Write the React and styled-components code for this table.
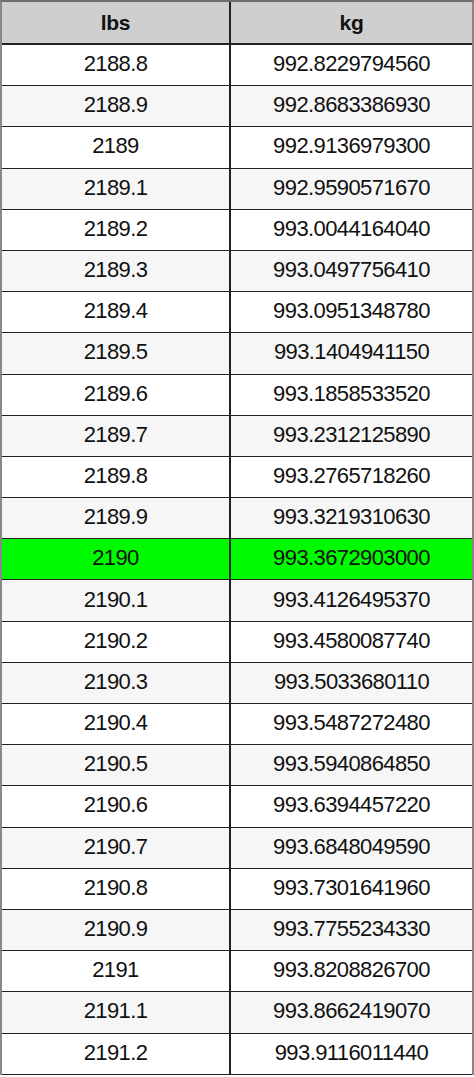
import React from "react";
import styled, { createGlobalStyle } from "styled-components";

const rows = [
  ["2188.8", "992.8229794560"],
  ["2188.9", "992.8683386930"],
  ["2189", "992.9136979300"],
  ["2189.1", "992.9590571670"],
  ["2189.2", "993.0044164040"],
  ["2189.3", "993.0497756410"],
  ["2189.4", "993.0951348780"],
  ["2189.5", "993.1404941150"],
  ["2189.6", "993.1858533520"],
  ["2189.7", "993.2312125890"],
  ["2189.8", "993.2765718260"],
  ["2189.9", "993.3219310630"],
  ["2190", "993.3672903000"],
  ["2190.1", "993.4126495370"],
  ["2190.2", "993.4580087740"],
  ["2190.3", "993.5033680110"],
  ["2190.4", "993.5487272480"],
  ["2190.5", "993.5940864850"],
  ["2190.6", "993.6394457220"],
  ["2190.7", "993.6848049590"],
  ["2190.8", "993.7301641960"],
  ["2190.9", "993.7755234330"],
  ["2191", "993.8208826700"],
  ["2191.1", "993.8662419070"],
  ["2191.2", "993.9116011440"],
];

const GlobalStyle = createGlobalStyle`
  body {
    margin: 0;
    background: #ffffff;
    font-family: "Liberation Sans", Arial, sans-serif;
  }
`;

export default function App() {
  return (
    <>
      <GlobalStyle />
      <Table>
        <Header>
          <HeadCell>lbs</HeadCell>
          <HeadCell $last>kg</HeadCell>
        </Header>
        {rows.map((r, i) => (
          <Row key={i} $alt={i % 2 === 1} $hit={r[0] === "2190"}>
            <Cell>{r[0]}</Cell>
            <Cell $last>{r[1]}</Cell>
          </Row>
        ))}
      </Table>
    </>
  );
}

const Table = styled.div`
  width: 474px;
  box-sizing: border-box;
  border-top: 2px solid #6e6e6e;
  border-left: 2px solid #888888;
  border-right: 2px solid #888888;
  display: flex;
  flex-direction: column;
`;

const Header = styled.div`
  display: grid;
  grid-template-columns: 229px 1fr;
  height: 41px;
  background: #cfcfcf;
  border-bottom: 2px solid #222222;
`;

const HeadCell = styled.div`
  display: flex;
  align-items: center;
  justify-content: center;
  font-weight: 700;
  font-size: 21px;
  letter-spacing: -0.3px;
  color: #111111;
  border-right: ${(p) => (p.$last ? "none" : "2px solid #222222")};
`;

const Row = styled.div`
  display: grid;
  grid-template-columns: 229px 1fr;
  height: 40.2px;
  background: ${(p) => (p.$hit ? "#00fa00" : p.$alt ? "#f6f6f6" : "#ffffff")};
  border-bottom: 1px solid #222222;
`;

const Cell = styled.div`
  display: flex;
  align-items: center;
  justify-content: center;
  padding-bottom: 2px;
  font-size: 22px;
  letter-spacing: -0.6px;
  color: #111111;
  border-right: ${(p) => (p.$last ? "none" : "2px solid #222222")};
`;
